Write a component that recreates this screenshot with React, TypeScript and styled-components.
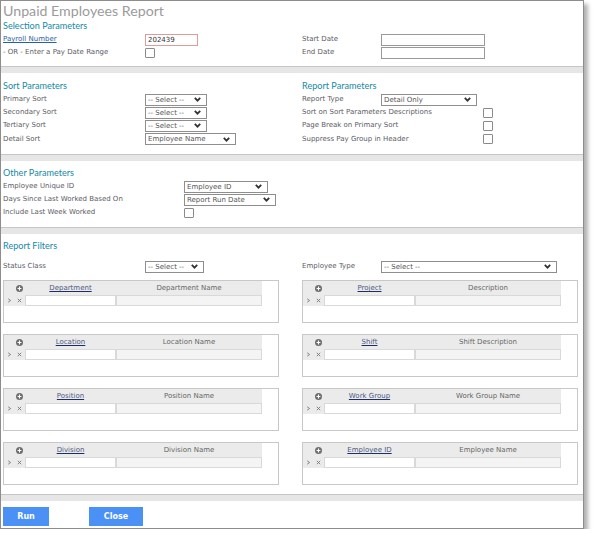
import React from 'react';
import styled, { createGlobalStyle } from 'styled-components';

const Global = createGlobalStyle`
  html, body { margin: 0; padding: 0; background: #fff; }
  body { font-family: "DejaVu Sans", Verdana, sans-serif; }
  * { box-sizing: border-box; }
`;

const Window = styled.div`
  width: 584px;
  border: 1px solid #8d8d8d;
  background: #fff;
  box-shadow: 4px 4px 4px rgba(0, 0, 0, 0.3);
  display: flex;
  flex-direction: column;
`;

const Title = styled.h1`
  margin: 0;
  padding: 0 0 0 2px;
  height: 19px;
  font: 400 14.2px/19px Lato, "Open Sans", sans-serif;
  color: #9b9b9b;
  white-space: nowrap;
`;

const Section = styled.section<{ $pt: number; $pb: number }>`
  padding: ${(p) => p.$pt}px 2px ${(p) => p.$pb}px 2px;
`;

const Band = styled.div`
  height: 7px;
  border-top: 1px solid #c6c6c6;
  background: #e6e6e6;
`;

const SectionHeader = styled.h2`
  margin: 0;
  height: 13px;
  font: 400 9.1px/12px Lato, "Open Sans", sans-serif;
  color: #168aa6;
  white-space: nowrap;
`;

const TwoCol = styled.div<{ $mt?: number }>`
  display: grid;
  grid-template-columns: 299px 1fr;
  margin-top: ${(p) => p.$mt ?? 0}px;
`;

const Col = styled.div`
  display: flex;
  flex-direction: column;
`;

const Row = styled.div<{ $h?: number }>`
  display: flex;
  align-items: center;
  height: ${(p) => p.$h ?? 13}px;
`;

const Label = styled.span<{ $w: number }>`
  width: ${(p) => p.$w}px;
  flex: none;
  font-size: 7px;
  line-height: 9px;
  color: #5c5c66;
  white-space: nowrap;
`;

const LinkLabel = styled(Label)`
  color: #2a5ea8;
  text-decoration: underline;
  text-underline-offset: 1px;
`;

const TextInput = styled.div<{ $w: number; $err?: boolean }>`
  width: ${(p) => p.$w}px;
  height: 12px;
  border: 1px solid ${(p) => (p.$err ? '#dc9c9c' : '#999')};
  background: #fff;
  font-size: 7px;
  line-height: 10px;
  color: #333;
  padding-left: 2px;
`;

const Check = styled.div`
  width: 10px;
  height: 10px;
  border: 1px solid #8a8a8a;
  border-radius: 1px;
  background: #fff;
`;

const SelectBox = styled.div<{ $w: number }>`
  width: ${(p) => p.$w}px;
  height: 12px;
  border: 1px solid #8e8e8e;
  background: #fff;
  display: flex;
  align-items: center;
  justify-content: space-between;
  padding: 0 5px 0 2px;
  font-size: 7px;
  color: #555;
  white-space: nowrap;
`;

const Chevron = () => (
  <svg width="7" height="5" viewBox="0 0 7 5">
    <polyline points="0.8,0.8 3.5,3.6 6.2,0.8" fill="none" stroke="#333" strokeWidth="1.8" />
  </svg>
);

const Select: React.FC<{ w: number; value: string }> = ({ w, value }) => (
  <SelectBox $w={w}>
    <span>{value}</span>
    <Chevron />
  </SelectBox>
);

const BoxGrid = styled.div`
  display: grid;
  grid-template-columns: 276px 276px;
  column-gap: 23px;
  row-gap: 11px;
  margin-top: 7px;
`;

const FilterBox = styled.div`
  height: 43px;
  border: 1px solid #c8c8c8;
  background: #fff;
`;

const GridRow = styled.div<{ $h: number }>`
  display: grid;
  grid-template-columns: 10px 11px 91px 146px;
  height: ${(p) => p.$h}px;
  align-items: stretch;
`;

const HeadCell = styled.div`
  background: #ebebeb;
  display: flex;
  align-items: center;
  justify-content: center;
  font-size: 7px;
  color: #666;
  white-space: nowrap;
`;

const HeadLink = styled.span`
  color: #4d5a7e;
  text-decoration: underline;
  text-decoration-color: #1a2c6b;
  text-underline-offset: 1px;
`;

const RowTool = styled.div`
  background: #ebebeb;
  display: flex;
  align-items: center;
  justify-content: center;
`;

const DataCell = styled.div<{ $bg: string }>`
  background: ${(p) => p.$bg};
  border: 1px solid #d9d9d9;
`;

const PlusIcon = () => (
  <svg width="7" height="7" viewBox="0 0 7 7">
    <circle cx="3.5" cy="3.5" r="3.5" fill="#6e6e6e" />
    <path d="M3.5 1.6v3.8M1.6 3.5h3.8" stroke="#fff" strokeWidth="1.1" />
  </svg>
);

const ExpandIcon = () => (
  <svg width="5" height="5" viewBox="0 0 5 5">
    <polyline points="1.2,0.8 3.6,2.5 1.2,4.2" fill="none" stroke="#777" strokeWidth="0.9" />
  </svg>
);

const CloseIcon = () => (
  <svg width="5" height="5" viewBox="0 0 5 5">
    <path d="M0.8 0.8L4.2 4.2M4.2 0.8L0.8 4.2" stroke="#777" strokeWidth="0.9" />
  </svg>
);

const Filter: React.FC<{ code: string; name: string }> = ({ code, name }) => (
  <FilterBox>
    <GridRow $h={14}>
      <HeadCell />
      <HeadCell>
        <PlusIcon />
      </HeadCell>
      <HeadCell>
        <HeadLink>{code}</HeadLink>
      </HeadCell>
      <HeadCell>{name}</HeadCell>
    </GridRow>
    <GridRow $h={11}>
      <RowTool>
        <ExpandIcon />
      </RowTool>
      <RowTool>
        <CloseIcon />
      </RowTool>
      <DataCell $bg="#fff" />
      <DataCell $bg="#f4f4f4" />
    </GridRow>
  </FilterBox>
);

const ButtonBar = styled.div`
  display: flex;
  gap: 40px;
  padding: 6px 2px 2px 2px;
`;

const Button = styled.button<{ $w: number }>`
  width: ${(p) => p.$w}px;
  height: 19px;
  border: none;
  padding: 0;
  background: #4b90f4;
  color: #fff;
  font: 700 8px "DejaVu Sans", Verdana, sans-serif;
`;

const filters: [string, string][] = [
  ['Department', 'Department Name'],
  ['Project', 'Description'],
  ['Location', 'Location Name'],
  ['Shift', 'Shift Description'],
  ['Position', 'Position Name'],
  ['Work Group', 'Work Group Name'],
  ['Division', 'Division Name'],
  ['Employee ID', 'Employee Name'],
];

export default function App() {
  return (
    <>
      <Global />
      <Window>
        <Title>Unpaid Employees Report</Title>
        <Section $pt={0} $pb={7}>
          <SectionHeader>Selection Parameters</SectionHeader>
          <TwoCol>
            <Col>
              <Row>
                <LinkLabel $w={142}>Payroll Number</LinkLabel>
                <TextInput $w={53} $err>
                  202439
                </TextInput>
              </Row>
              <Row>
                <Label $w={142}>- OR - Enter a Pay Date Range</Label>
                <Check />
              </Row>
            </Col>
            <Col>
              <Row>
                <Label $w={79}>Start Date</Label>
                <TextInput $w={104} />
              </Row>
              <Row>
                <Label $w={79}>End Date</Label>
                <TextInput $w={104} />
              </Row>
            </Col>
          </TwoCol>
        </Section>
        <Band />
        <Section $pt={7} $pb={8}>
          <TwoCol>
            <Col>
              <SectionHeader>Sort Parameters</SectionHeader>
              <Row>
                <Label $w={142}>Primary Sort</Label>
                <Select w={62} value="-- Select --" />
              </Row>
              <Row>
                <Label $w={142}>Secondary Sort</Label>
                <Select w={62} value="-- Select --" />
              </Row>
              <Row>
                <Label $w={142}>Tertiary Sort</Label>
                <Select w={62} value="-- Select --" />
              </Row>
              <Row $h={14}>
                <Label $w={142}>Detail Sort</Label>
                <Select w={91} value="Employee Name" />
              </Row>
            </Col>
            <Col>
              <SectionHeader>Report Parameters</SectionHeader>
              <Row>
                <Label $w={79}>Report Type</Label>
                <Select w={96} value="Detail Only" />
              </Row>
              <Row>
                <Label $w={181}>Sort on Sort Parameters Descriptions</Label>
                <Check />
              </Row>
              <Row>
                <Label $w={181}>Page Break on Primary Sort</Label>
                <Check />
              </Row>
              <Row $h={14}>
                <Label $w={181}>Suppress Pay Group in Header</Label>
                <Check />
              </Row>
            </Col>
          </TwoCol>
        </Section>
        <Band />
        <Section $pt={6} $pb={8}>
          <SectionHeader>Other Parameters</SectionHeader>
          <Row>
            <Label $w={181}>Employee Unique ID</Label>
            <Select w={84} value="Employee ID" />
          </Row>
          <Row>
            <Label $w={181}>Days Since Last Worked Based On</Label>
            <Select w={92} value="Report Run Date" />
          </Row>
          <Row>
            <Label $w={181}>Include Last Week Worked</Label>
            <Check />
          </Row>
        </Section>
        <Band />
        <Section $pt={6} $pb={9}>
          <SectionHeader>Report Filters</SectionHeader>
          <TwoCol $mt={7}>
            <Row>
              <Label $w={142}>Status Class</Label>
              <Select w={59} value="-- Select --" />
            </Row>
            <Row>
              <Label $w={79}>Employee Type</Label>
              <Select w={176} value="-- Select --" />
            </Row>
          </TwoCol>
          <BoxGrid>
            {filters.map(([c, n]) => (
              <Filter key={c} code={c} name={n} />
            ))}
          </BoxGrid>
        </Section>
        <Band />
        <ButtonBar>
          <Button $w={46}>Run</Button>
          <Button $w={54}>Close</Button>
        </ButtonBar>
      </Window>
    </>
  );
}
